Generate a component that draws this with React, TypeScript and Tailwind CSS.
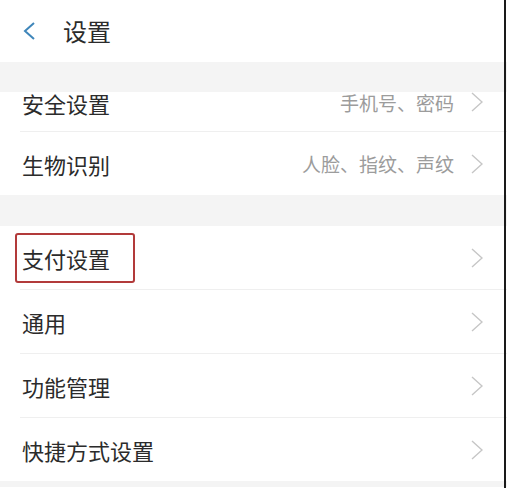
import { ReactNode } from 'react'

const font = { fontFamily: '"Noto Sans CJK SC", "Noto Sans", sans-serif' }

function Chevron() {
  return (
    <svg width="12" height="20" viewBox="0 0 12 20" className="shrink-0">
      <polyline points="1,1 11,10 1,19" fill="none" stroke="#c6c6c6" strokeWidth="1.4" />
    </svg>
  )
}

function Row({ title, value, boxed, top }: { title: string; value?: string; boxed?: boolean; top?: boolean }) {
  let label: ReactNode = <span className="text-[22px] leading-none text-[#2b2b2b]">{title}</span>
  if (boxed) {
    label = (
      <span className="-ml-[7px] flex h-[50px] w-[120px] items-center rounded-[3px] border-2 border-[#b23a3a] pl-[5px]">
        {label}
      </span>
    )
  }
  return (
    <div className={top ? 'flex h-[39px] items-start pl-[22px] pr-[24px]' : 'flex h-[63px] items-center pl-[22px] pr-[24px]'}>
      {label}
      <div className="ml-auto flex items-center gap-[17px]">
        {value && <span className="text-[19px] leading-none text-[#9c9c9c]">{value}</span>}
        <Chevron />
      </div>
    </div>
  )
}

function Divider() {
  return <div className="ml-[20px] h-px bg-[#efefef]" />
}

export default function App() {
  return (
    <div className="relative h-[488px] w-[507px] overflow-hidden bg-white" style={font}>
      <div className="flex h-[62px] items-center">
        <svg width="14" height="20" viewBox="0 0 14 20" className="ml-[22px]">
          <polyline points="12,2 3,10 12,18" fill="none" stroke="#3f86ba" strokeWidth="2" />
        </svg>
        <span className="ml-[27px] text-[24px] leading-none text-[#2b2b2b]">设置</span>
      </div>
      <div className="h-[30px] bg-[#f4f4f4]" />
      <Row title="安全设置" value="手机号、密码" top />
      <Divider />
      <Row title="生物识别" value="人脸、指纹、声纹" />
      <div className="h-[31px] bg-[#f4f4f4]" />
      <Row title="支付设置" boxed />
      <Divider />
      <Row title="通用" />
      <Divider />
      <Row title="功能管理" />
      <Divider />
      <Row title="快捷方式设置" />
      <div className="h-[6px] bg-[#f4f4f4]" />
      <div className="absolute right-[1px] top-0 h-full w-[2px] bg-[#1a1a1a]" />
    </div>
  )
}
